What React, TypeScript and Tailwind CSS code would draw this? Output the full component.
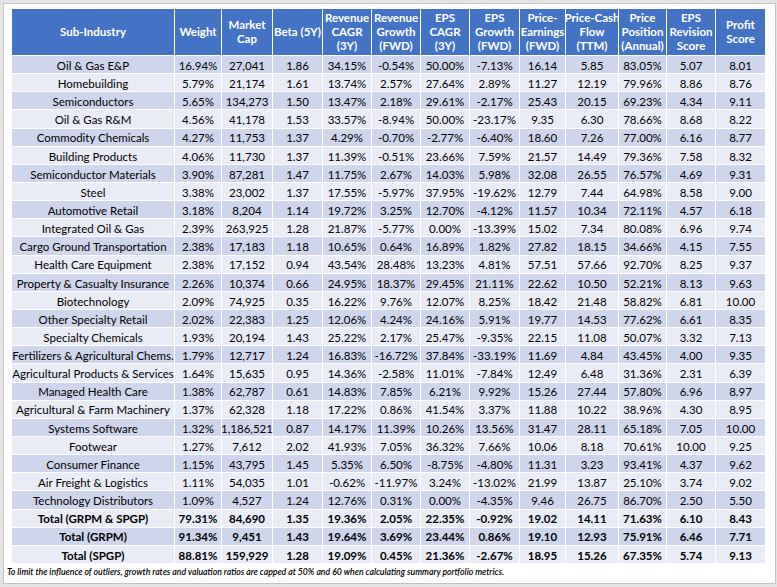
import React from "react"

const cols = [
  { w: "w-[162px]", head: ["Sub-Industry"] },
  { w: "w-[46px]", head: ["Weight"] },
  { w: "w-[50px]", head: ["Market", "Cap"] },
  { w: "w-[49px]", head: ["Beta (5Y)"] },
  { w: "w-[48px]", head: ["Revenue", "CAGR", "(3Y)"] },
  { w: "w-[48px]", head: ["Revenue", "Growth", "(FWD)"] },
  { w: "w-[48px]", head: ["EPS", "CAGR", "(3Y)"] },
  { w: "w-[49px]", head: ["EPS", "Growth", "(FWD)"] },
  { w: "w-[45px]", head: ["Price-", "Earnings", "(FWD)"] },
  { w: "w-[52px]", head: ["Price-Cash", "Flow", "(TTM)"] },
  { w: "w-[47px]", head: ["Price", "Position", "(Annual)"] },
  { w: "w-[48px]", head: ["EPS", "Revision", "Score"] },
  { w: "w-[49px]", head: ["Profit", "Score"] },
]

const rows = [
  ["Oil & Gas E&P", "16.94%", "27,041", "1.86", "34.15%", "-0.54%", "50.00%", "-7.13%", "16.14", "5.85", "83.05%", "5.07", "8.01"],
  ["Homebuilding", "5.79%", "21,174", "1.61", "13.74%", "2.57%", "27.64%", "2.89%", "11.27", "12.19", "79.96%", "8.86", "8.76"],
  ["Semiconductors", "5.65%", "134,273", "1.50", "13.47%", "2.18%", "29.61%", "-2.17%", "25.43", "20.15", "69.23%", "4.34", "9.11"],
  ["Oil & Gas R&M", "4.56%", "41,178", "1.53", "33.57%", "-8.94%", "50.00%", "-23.17%", "9.35", "6.30", "78.66%", "8.68", "8.22"],
  ["Commodity Chemicals", "4.27%", "11,753", "1.37", "4.29%", "-0.70%", "-2.77%", "-6.40%", "18.60", "7.26", "77.00%", "6.16", "8.77"],
  ["Building Products", "4.06%", "11,730", "1.37", "11.39%", "-0.51%", "23.66%", "7.59%", "21.57", "14.49", "79.36%", "7.58", "8.32"],
  ["Semiconductor Materials", "3.90%", "87,281", "1.47", "11.75%", "2.67%", "14.03%", "5.98%", "32.08", "26.55", "76.57%", "4.69", "9.31"],
  ["Steel", "3.38%", "23,002", "1.37", "17.55%", "-5.97%", "37.95%", "-19.62%", "12.79", "7.44", "64.98%", "8.58", "9.00"],
  ["Automotive Retail", "3.18%", "8,204", "1.14", "19.72%", "3.25%", "12.70%", "-4.12%", "11.57", "10.34", "72.11%", "4.57", "6.18"],
  ["Integrated Oil & Gas", "2.39%", "263,925", "1.28", "21.87%", "-5.77%", "0.00%", "-13.39%", "15.02", "7.34", "80.08%", "6.96", "9.74"],
  ["Cargo Ground Transportation", "2.38%", "17,183", "1.18", "10.65%", "0.64%", "16.89%", "1.82%", "27.82", "18.15", "34.66%", "4.15", "7.55"],
  ["Health Care Equipment", "2.38%", "17,152", "0.94", "43.54%", "28.48%", "13.23%", "4.81%", "57.51", "57.66", "92.70%", "8.25", "9.37"],
  ["Property & Casualty Insurance", "2.26%", "10,374", "0.66", "24.95%", "18.37%", "29.45%", "21.11%", "22.62", "10.50", "52.21%", "8.13", "9.63"],
  ["Biotechnology", "2.09%", "74,925", "0.35", "16.22%", "9.76%", "12.07%", "8.25%", "18.42", "21.48", "58.82%", "6.81", "10.00"],
  ["Other Specialty Retail", "2.02%", "22,383", "1.25", "12.06%", "4.24%", "24.16%", "5.91%", "19.77", "14.53", "77.62%", "6.61", "8.35"],
  ["Specialty Chemicals", "1.93%", "20,194", "1.43", "25.22%", "2.17%", "25.47%", "-9.35%", "22.15", "11.08", "50.07%", "3.32", "7.13"],
  ["Fertilizers & Agricultural Chems.", "1.79%", "12,717", "1.24", "16.83%", "-16.72%", "37.84%", "-33.19%", "11.69", "4.84", "43.45%", "4.00", "9.35"],
  ["Agricultural Products & Services", "1.64%", "15,635", "0.95", "14.36%", "-2.58%", "11.01%", "-7.84%", "12.49", "6.48", "31.36%", "2.31", "6.39"],
  ["Managed Health Care", "1.38%", "62,787", "0.61", "14.83%", "7.85%", "6.21%", "9.92%", "15.26", "27.44", "57.80%", "6.96", "8.97"],
  ["Agricultural & Farm Machinery", "1.37%", "62,328", "1.18", "17.22%", "0.86%", "41.54%", "3.37%", "11.88", "10.22", "38.96%", "4.30", "8.95"],
  ["Systems Software", "1.32%", "1,186,521", "0.87", "14.17%", "11.39%", "10.26%", "13.56%", "31.47", "28.11", "65.18%", "7.05", "10.00"],
  ["Footwear", "1.27%", "7,612", "2.02", "41.93%", "7.05%", "36.32%", "7.66%", "10.06", "8.18", "70.61%", "10.00", "9.25"],
  ["Consumer Finance", "1.15%", "43,795", "1.45", "5.35%", "6.50%", "-8.75%", "-4.80%", "11.31", "3.23", "93.41%", "4.37", "9.62"],
  ["Air Freight & Logistics", "1.11%", "54,035", "1.01", "-0.62%", "-11.97%", "3.24%", "-13.02%", "21.99", "13.87", "25.10%", "3.74", "9.02"],
  ["Technology Distributors", "1.09%", "4,527", "1.24", "12.76%", "0.31%", "0.00%", "-4.35%", "9.46", "26.75", "86.70%", "2.50", "5.50"],
]

const totals = [
  ["Total (GRPM & SPGP)", "79.31%", "84,690", "1.35", "19.36%", "2.05%", "22.35%", "-0.92%", "19.02", "14.11", "71.63%", "6.10", "8.43"],
  ["Total (GRPM)", "91.34%", "9,451", "1.43", "19.64%", "3.69%", "23.44%", "0.86%", "19.10", "12.93", "75.91%", "6.46", "7.71"],
  ["Total (SPGP)", "88.81%", "159,929", "1.28", "19.09%", "0.45%", "21.36%", "-2.67%", "18.95", "15.26", "67.35%", "5.74", "9.13"],
]

function Row({ cells, index, bold }: { cells: string[]; index: number; bold?: boolean }) {
  const bg = index % 2 === 0 ? "bg-[#cfd5ea]" : "bg-[#e9ebf5]"
  return (
    <div className="flex gap-px">
      {cells.map((c, i) => (
        <div
          key={i}
          className={`${cols[i].w} ${bg} h-[17.15px] flex items-center justify-center whitespace-nowrap pt-[2px] ${bold ? "font-bold" : ""}`}
        >
          {c}
        </div>
      ))}
    </div>
  )
}

export default function App() {
  return (
    <div className="w-[777px] h-[587px] bg-[#e3e3e3] pl-[3px] pt-[3px]">
      <div className="w-[773px] h-[581px] border border-[#c4c4c4] bg-white">
        {/* table */}
        <div className="ml-[8px] mt-[5px] flex flex-col gap-px text-[11.5px] leading-none text-black font-['Lato',sans-serif]">
          <div className="flex gap-px">
            {cols.map((c, i) => (
              <div
                key={i}
                className={`${c.w} h-[46px] bg-[#4472c4] text-white font-bold flex flex-col items-center justify-center text-center leading-[14px] whitespace-nowrap`}
              >
                {c.head.map((l, j) => (
                  <span key={j}>{l}</span>
                ))}
              </div>
            ))}
          </div>
          {rows.map((r, i) => (
            <Row key={i} cells={r} index={i} />
          ))}
          {totals.map((r, i) => (
            <Row key={i} cells={r} index={rows.length + i} bold />
          ))}
        </div>

        <p className="ml-[3px] mt-[2px] text-[8.7px] italic font-semibold text-black font-['Lato',sans-serif]">
          To limit the influence of outliers, growth rates and valuation ratios are capped at 50% and 60 when calculating summary portfolio metrics.
        </p>
      </div>
    </div>
  )
}
